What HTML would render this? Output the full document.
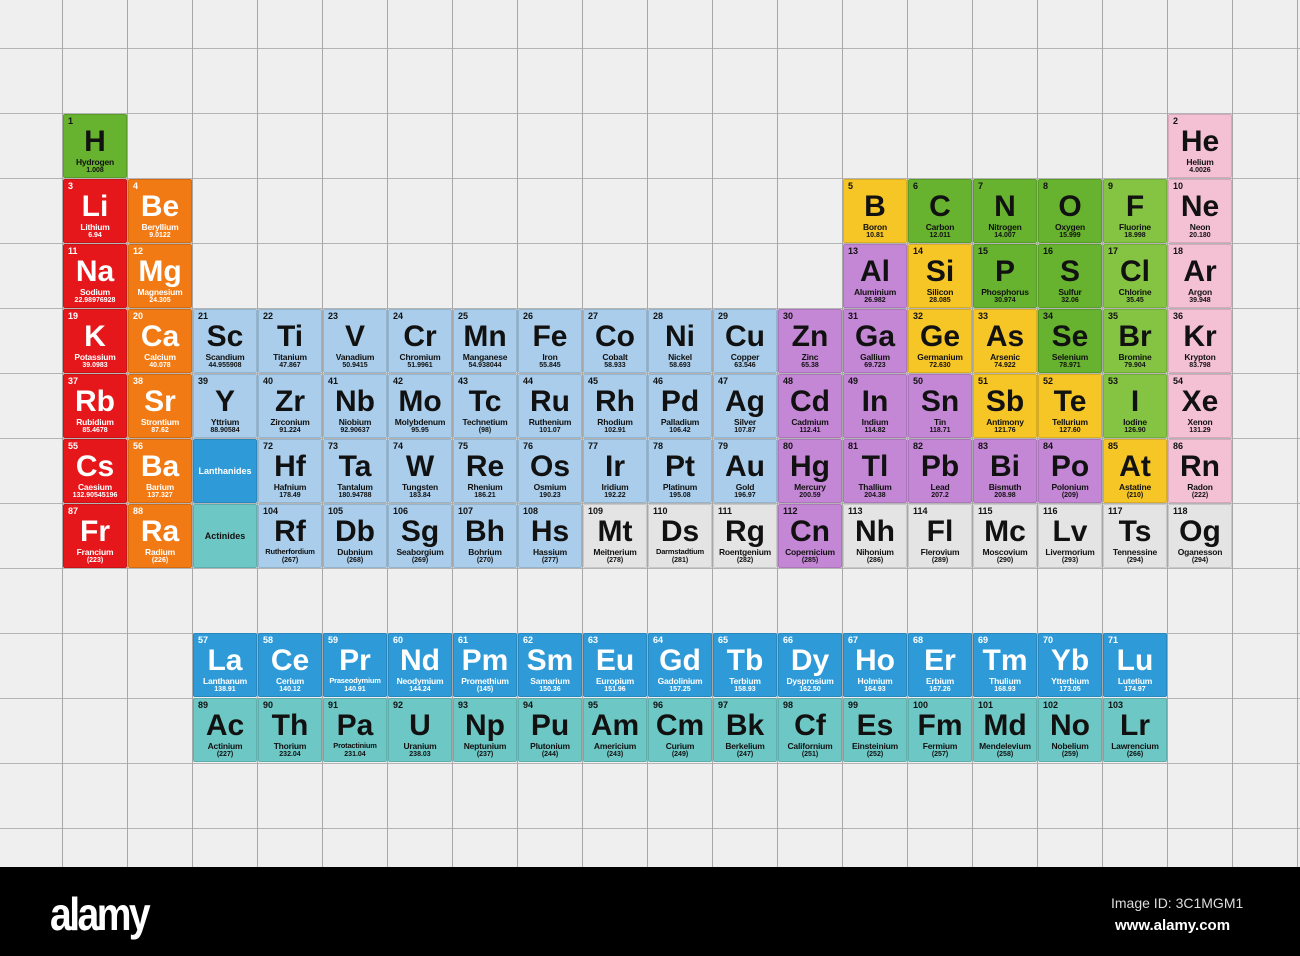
<!DOCTYPE html>
<html><head><meta charset="utf-8">
<style>
html,body{margin:0;padding:0}
body{width:1300px;height:956px;position:relative;overflow:hidden;font-family:"Liberation Sans",Arial,sans-serif;
background-color:#efefef;
background-image:linear-gradient(to right,#a8a8a8 0,#a8a8a8 1px,transparent 1px),linear-gradient(to bottom,#b4b4b4 0,#b4b4b4 1px,transparent 1px);
background-size:65px 65px;background-position:62px 48px;}
.c{position:absolute;width:64px;height:64px;border-radius:2px;box-sizing:border-box;color:#111;text-align:center;font-weight:bold;box-shadow:inset 0 0 0 1px rgba(0,0,0,.12)}
.n{position:absolute;left:5px;top:2px;font-size:9px;}
.s{position:absolute;left:0;right:0;top:12px;font-size:30px;line-height:32px;}
.m{position:absolute;left:0;right:0;top:43px;font-size:8.5px;white-space:nowrap;letter-spacing:-.2px}
.w{position:absolute;left:0;right:0;top:53px;font-size:7px;}
.wt{color:#fff}
.lab{position:absolute;left:0;right:0;top:27px;font-size:9px}
#bar{position:absolute;left:0;top:867px;width:1300px;height:89px;background:#000}
#logo{position:absolute;left:50px;top:20px;color:#fff;font-size:46px;font-weight:bold;letter-spacing:-3px;transform:scaleX(.85);transform-origin:left}
#id1{position:absolute;left:1111px;top:28px;color:#ddd;font-size:14px}
#id2{position:absolute;left:1115px;top:50px;color:#fff;font-size:15px;font-weight:bold}
</style></head><body>
<div id="t"></div>
<div id="bar"><div id="logo">alamy</div><div id="id1">Image ID: 3C1MGM1</div><div id="id2">www.alamy.com</div></div>
<script>
var C={nm:'#67b22e',al:'#e5171b',ae:'#f27a14',tm:'#a9cdea',pt:'#c487d5',md:'#f6c526',ha:'#85c443',ng:'#f4c1d4',un:'#e4e4e4',la:'#2e9bd8',ac:'#6dc7c4'};
var D=[
[1,'H','Hydrogen','1.008',1,1,'nm'],[2,'He','Helium','4.0026',18,1,'ng'],
[3,'Li','Lithium','6.94',1,2,'al'],[4,'Be','Beryllium','9.0122',2,2,'ae'],[5,'B','Boron','10.81',13,2,'md'],[6,'C','Carbon','12.011',14,2,'nm'],[7,'N','Nitrogen','14.007',15,2,'nm'],[8,'O','Oxygen','15.999',16,2,'nm'],[9,'F','Fluorine','18.998',17,2,'ha'],[10,'Ne','Neon','20.180',18,2,'ng'],
[11,'Na','Sodium','22.98976928',1,3,'al'],[12,'Mg','Magnesium','24.305',2,3,'ae'],[13,'Al','Aluminium','26.982',13,3,'pt'],[14,'Si','Silicon','28.085',14,3,'md'],[15,'P','Phosphorus','30.974',15,3,'nm'],[16,'S','Sulfur','32.06',16,3,'nm'],[17,'Cl','Chlorine','35.45',17,3,'ha'],[18,'Ar','Argon','39.948',18,3,'ng'],
[19,'K','Potassium','39.0983',1,4,'al'],[20,'Ca','Calcium','40.078',2,4,'ae'],[21,'Sc','Scandium','44.955908',3,4,'tm'],[22,'Ti','Titanium','47.867',4,4,'tm'],[23,'V','Vanadium','50.9415',5,4,'tm'],[24,'Cr','Chromium','51.9961',6,4,'tm'],[25,'Mn','Manganese','54.938044',7,4,'tm'],[26,'Fe','Iron','55.845',8,4,'tm'],[27,'Co','Cobalt','58.933',9,4,'tm'],[28,'Ni','Nickel','58.693',10,4,'tm'],[29,'Cu','Copper','63.546',11,4,'tm'],[30,'Zn','Zinc','65.38',12,4,'pt'],[31,'Ga','Gallium','69.723',13,4,'pt'],[32,'Ge','Germanium','72.630',14,4,'md'],[33,'As','Arsenic','74.922',15,4,'md'],[34,'Se','Selenium','78.971',16,4,'nm'],[35,'Br','Bromine','79.904',17,4,'ha'],[36,'Kr','Krypton','83.798',18,4,'ng'],
[37,'Rb','Rubidium','85.4678',1,5,'al'],[38,'Sr','Strontium','87.62',2,5,'ae'],[39,'Y','Yttrium','88.90584',3,5,'tm'],[40,'Zr','Zirconium','91.224',4,5,'tm'],[41,'Nb','Niobium','92.90637',5,5,'tm'],[42,'Mo','Molybdenum','95.95',6,5,'tm'],[43,'Tc','Technetium','(98)',7,5,'tm'],[44,'Ru','Ruthenium','101.07',8,5,'tm'],[45,'Rh','Rhodium','102.91',9,5,'tm'],[46,'Pd','Palladium','106.42',10,5,'tm'],[47,'Ag','Silver','107.87',11,5,'tm'],[48,'Cd','Cadmium','112.41',12,5,'pt'],[49,'In','Indium','114.82',13,5,'pt'],[50,'Sn','Tin','118.71',14,5,'pt'],[51,'Sb','Antimony','121.76',15,5,'md'],[52,'Te','Tellurium','127.60',16,5,'md'],[53,'I','Iodine','126.90',17,5,'ha'],[54,'Xe','Xenon','131.29',18,5,'ng'],
[55,'Cs','Caesium','132.90545196',1,6,'al'],[56,'Ba','Barium','137.327',2,6,'ae'],[72,'Hf','Hafnium','178.49',4,6,'tm'],[73,'Ta','Tantalum','180.94788',5,6,'tm'],[74,'W','Tungsten','183.84',6,6,'tm'],[75,'Re','Rhenium','186.21',7,6,'tm'],[76,'Os','Osmium','190.23',8,6,'tm'],[77,'Ir','Iridium','192.22',9,6,'tm'],[78,'Pt','Platinum','195.08',10,6,'tm'],[79,'Au','Gold','196.97',11,6,'tm'],[80,'Hg','Mercury','200.59',12,6,'pt'],[81,'Tl','Thallium','204.38',13,6,'pt'],[82,'Pb','Lead','207.2',14,6,'pt'],[83,'Bi','Bismuth','208.98',15,6,'pt'],[84,'Po','Polonium','(209)',16,6,'pt'],[85,'At','Astatine','(210)',17,6,'md'],[86,'Rn','Radon','(222)',18,6,'ng'],
[87,'Fr','Francium','(223)',1,7,'al'],[88,'Ra','Radium','(226)',2,7,'ae'],[104,'Rf','Rutherfordium','(267)',4,7,'tm'],[105,'Db','Dubnium','(268)',5,7,'tm'],[106,'Sg','Seaborgium','(269)',6,7,'tm'],[107,'Bh','Bohrium','(270)',7,7,'tm'],[108,'Hs','Hassium','(277)',8,7,'tm'],[109,'Mt','Meitnerium','(278)',9,7,'un'],[110,'Ds','Darmstadtium','(281)',10,7,'un'],[111,'Rg','Roentgenium','(282)',11,7,'un'],[112,'Cn','Copernicium','(285)',12,7,'pt'],[113,'Nh','Nihonium','(286)',13,7,'un'],[114,'Fl','Flerovium','(289)',14,7,'un'],[115,'Mc','Moscovium','(290)',15,7,'un'],[116,'Lv','Livermorium','(293)',16,7,'un'],[117,'Ts','Tennessine','(294)',17,7,'un'],[118,'Og','Oganesson','(294)',18,7,'un']
];
var L=[['La','Lanthanum','138.91'],['Ce','Cerium','140.12'],['Pr','Praseodymium','140.91'],['Nd','Neodymium','144.24'],['Pm','Promethium','(145)'],['Sm','Samarium','150.36'],['Eu','Europium','151.96'],['Gd','Gadolinium','157.25'],['Tb','Terbium','158.93'],['Dy','Dysprosium','162.50'],['Ho','Holmium','164.93'],['Er','Erbium','167.26'],['Tm','Thulium','168.93'],['Yb','Ytterbium','173.05'],['Lu','Lutetium','174.97']];
var A=[['Ac','Actinium','(227)'],['Th','Thorium','232.04'],['Pa','Protactinium','231.04'],['U','Uranium','238.03'],['Np','Neptunium','(237)'],['Pu','Plutonium','(244)'],['Am','Americium','(243)'],['Cm','Curium','(249)'],['Bk','Berkelium','(247)'],['Cf','Californium','(251)'],['Es','Einsteinium','(252)'],['Fm','Fermium','(257)'],['Md','Mendelevium','(258)'],['No','Nobelium','(259)'],['Lr','Lawrencium','(266)']];
L.forEach(function(e,i){D.push([57+i,e[0],e[1],e[2],3+i,9,'la'])});
A.forEach(function(e,i){D.push([89+i,e[0],e[1],e[2],3+i,10,'ac'])});
var h='';
function pos(c,r){var y=r<=7?113+(r-1)*65:(r==9?632:697);return 'left:'+(62+(c-1)*65+1)+'px;top:'+(y+1)+'px;'}
D.forEach(function(d){var w=(d[6]=='al'||d[6]=='ae'||d[6]=='la')?' wt':'';
var fs=d[2].length>11?'font-size:7.5px;':'';
h+='<div class="c'+w+'" style="'+pos(d[4],d[5])+'background:'+C[d[6]]+'"><span class="n">'+d[0]+'</span><div class="s">'+d[1]+'</div><div class="m" style="'+fs+'">'+d[2]+'</div><div class="w">'+d[3]+'</div></div>';});
h+='<div class="c wt" style="'+pos(3,6)+'background:'+C.la+'"><div class="lab">Lanthanides</div></div>';
h+='<div class="c" style="'+pos(3,7)+'background:'+C.ac+'"><div class="lab">Actinides</div></div>';
document.getElementById('t').innerHTML=h;
</script>
</body></html>
